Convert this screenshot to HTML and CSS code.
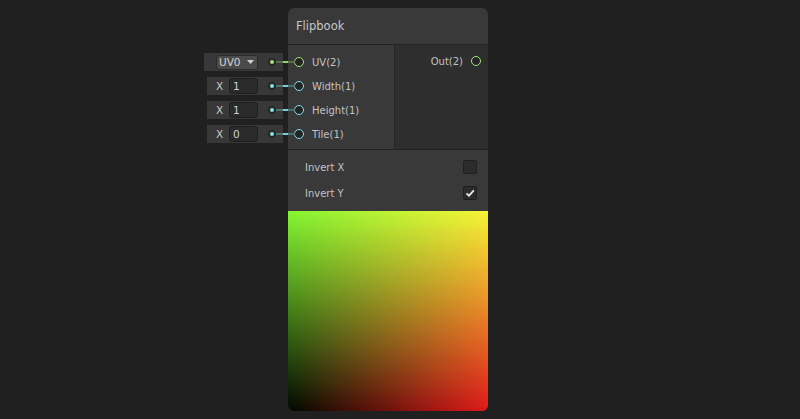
FILE: index.html
```html
<!DOCTYPE html>
<html>
<head>
<meta charset="utf-8">
<link rel="stylesheet" href="styles.css">
</head>
<body>
<div class="canvas">
  <div class="inputs">
    <div class="in-row">
      <div class="in-box uv-box">
        <div class="dropdown"><span>UV0</span><svg class="tri" width="7" height="4" viewBox="0 0 7 4"><path d="M0 0H7L3.5 4Z" fill="#cfcfcf"/></svg></div>
        <span class="dot green"></span>
      </div>
      <span class="wire green"></span>
    </div>
    <div class="in-row">
      <div class="in-box x-box">
        <span class="axis">X</span>
        <div class="field">1</div>
        <span class="dot cyan"></span>
      </div>
      <span class="wire cyan"></span>
    </div>
    <div class="in-row">
      <div class="in-box x-box">
        <span class="axis">X</span>
        <div class="field">1</div>
        <span class="dot cyan"></span>
      </div>
      <span class="wire cyan"></span>
    </div>
    <div class="in-row">
      <div class="in-box x-box">
        <span class="axis">X</span>
        <div class="field">0</div>
        <span class="dot cyan"></span>
      </div>
      <span class="wire cyan"></span>
    </div>
  </div>

  <div class="node">
    <div class="node-title">Flipbook</div>
    <div class="ports">
      <div class="in-col">
        <div class="port"><span class="ring green"></span><span class="label">UV(2)</span></div>
        <div class="port"><span class="ring cyan"></span><span class="label">Width(1)</span></div>
        <div class="port"><span class="ring cyan"></span><span class="label">Height(1)</span></div>
        <div class="port"><span class="ring cyan"></span><span class="label">Tile(1)</span></div>
      </div>
      <div class="out-col">
        <div class="port out"><span class="label">Out(2)</span><span class="ring green"></span></div>
      </div>
    </div>
    <div class="options">
      <div class="opt"><span class="label">Invert X</span><span class="check"></span></div>
      <div class="opt"><span class="label">Invert Y</span><span class="check"><svg width="12" height="12" viewBox="0 0 12 12"><path d="M2.5 6.3L5 8.7L9.8 3.4" fill="none" stroke="#e8e8e8" stroke-width="1.8"/></svg></span></div>
    </div>
    <div class="preview"></div>
  </div>
</div>
</body>
</html>
```

FILE: styles.css
```css
html, body {
  margin: 0;
  padding: 0;
}
body {
  width: 800px;
  height: 419px;
  overflow: hidden;
  background: #202020;
  font-family: "DejaVu Sans", sans-serif;
  color: #c4c4c4;
}
.canvas {
  display: flex;
  align-items: flex-start;
  padding: 8px 0 0 204px;
}

/* input views */
.inputs {
  width: 84px;
  margin-top: 42px;
  display: flex;
  flex-direction: column;
}
.in-row {
  position: relative;
  height: 24px;
  display: flex;
  align-items: center;
  justify-content: flex-end;
  padding-right: 5px;
}
.in-box {
  height: 18px;
  background: #383838;
  display: flex;
  align-items: center;
  box-sizing: border-box;
}
.uv-box {
  width: 79px;
  padding-left: 12px;
}
.x-box {
  width: 76px;
  padding-left: 9px;
}
.dropdown {
  width: 42px;
  height: 15px;
  box-sizing: border-box;
  background: #4a4a4a;
  border: 1px solid #2c2c2c;
  border-radius: 3px;
  display: flex;
  align-items: center;
  padding-left: 2px;
  font-size: 10.5px;
  color: #d2d2d2;
}
.tri {
  margin-left: 6px;
}
.axis {
  width: 7px;
  font-size: 10.5px;
  color: #c8c8c8;
}
.field {
  margin-left: 6px;
  width: 29px;
  height: 16px;
  box-sizing: border-box;
  background: #2a2a2a;
  border: 1px solid #1e1e1e;
  border-radius: 3px;
  font-size: 10.5px;
  line-height: 14px;
  padding-left: 3px;
  color: #d2d2d2;
}
.dot {
  margin-left: auto;
  margin-right: 7px;
  width: 4px;
  height: 4px;
  border-radius: 50%;
  border: 2px solid #262626;
}
.dot.green { background: #a6e47a; }
.dot.cyan { background: #84e4e7; }
.wire {
  position: absolute;
  left: 72px;
  top: 11px;
  width: 19px;
  height: 2px;
}
.wire.green {
  background: linear-gradient(to right, #55704a 0 7px, #9ad070 7px 12px, #55704a 12px);
}
.wire.cyan {
  background: linear-gradient(to right, #4c7374 0 7px, #7ccfd2 7px 12px, #4c7374 12px);
}

/* node */
.node {
  width: 200px;
  height: 403px;
  background: #393939;
  border-radius: 6px;
  overflow: hidden;
  display: flex;
  flex-direction: column;
}
.node-title {
  height: 36px;
  line-height: 36px;
  border-bottom: 1px solid #232323;
  padding-left: 8px;
  font-size: 11.5px;
  color: #c8c8c8;
}
.ports {
  height: 104px;
  display: flex;
  border-bottom: 1px solid #232323;
}
.in-col {
  width: 107px;
  box-sizing: border-box;
  padding-top: 5px;
  background: #393939;
  border-right: 1px solid #262626;
}
.out-col {
  flex: 1;
  padding-top: 4px;
  background: #2e2e2e;
}
.port {
  height: 24px;
  display: flex;
  align-items: center;
}
.in-col .port .ring {
  margin-left: 6px;
  margin-right: 8px;
}
.port.out {
  justify-content: flex-end;
  padding-right: 7px;
}
.port.out .ring {
  margin-left: 8px;
}
.label {
  font-size: 10px;
  color: #c2c2c2;
}
.ring {
  width: 8px;
  height: 8px;
  border-radius: 50%;
  background: #242424;
  border: 1px solid;
}
.ring.green { border-color: #a6e47a; }
.ring.cyan { border-color: #84e4e7; }

.options {
  height: 61px;
  box-sizing: border-box;
  padding-top: 4px;
}
.opt {
  height: 26px;
  display: flex;
  align-items: center;
  justify-content: space-between;
  padding: 0 11px 0 17px;
}
.check {
  width: 14px;
  height: 14px;
  box-sizing: border-box;
  background: #2c2c2c;
  border: 1px solid #1f1f1f;
  border-radius: 2px;
  display: flex;
  align-items: center;
  justify-content: center;
}

.preview {
  position: relative;
  height: 200px;
  background: linear-gradient(to right, #000900, #e01a1a);
}
.preview::before {
  content: "";
  position: absolute;
  inset: 0;
  background: linear-gradient(to right, #84f632, #f6f436);
  -webkit-mask-image: linear-gradient(to bottom, #000, rgba(0,0,0,0));
  mask-image: linear-gradient(to bottom, #000, rgba(0,0,0,0));
}
```
